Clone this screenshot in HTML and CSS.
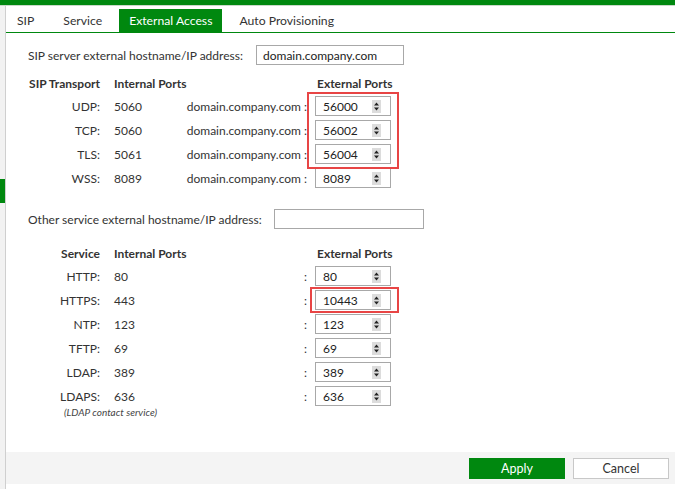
FILE: index.html
```html
<!DOCTYPE html>
<html>
<head>
<meta charset="utf-8">
<link rel="stylesheet" href="styles.css">
</head>
<body>
<div class="topbar"></div>
<div class="app">
  <aside class="rail"><div class="rail-mark"></div></aside>
  <main class="panel">
    <nav class="tabs">
      <span class="tab">SIP</span>
      <span class="tab">Service</span>
      <span class="tab active">External Access</span>
      <span class="tab">Auto Provisioning</span>
    </nav>
    <section class="form">
      <div class="host-row">
        <label class="host-label">SIP server external hostname/IP address:</label>
        <div class="text-input host-input">domain.company.com</div>
      </div>

      <div class="port-head first-head">
        <span class="c-label">SIP Transport</span>
        <span class="c-int">Internal Ports</span>
        <span class="c-host"></span>
        <span class="c-ext">External Ports</span>
      </div>
      <div class="port-rows">
        <div class="port-row"><span class="c-label">UDP:</span><span class="c-int">5060</span><span class="c-host">domain.company.com :</span><div class="spin"><span>56000</span><svg class="spin-btn" viewBox="0 0 9 13"><rect width="9" height="13" fill="#dcdcdc"/><path d="M4.5 2.5 L7 5.5 H2 Z M4.5 10.5 L7 7.5 H2 Z" fill="#222"/></svg></div></div>
        <div class="port-row"><span class="c-label">TCP:</span><span class="c-int">5060</span><span class="c-host">domain.company.com :</span><div class="spin"><span>56002</span><svg class="spin-btn" viewBox="0 0 9 13"><rect width="9" height="13" fill="#dcdcdc"/><path d="M4.5 2.5 L7 5.5 H2 Z M4.5 10.5 L7 7.5 H2 Z" fill="#222"/></svg></div></div>
        <div class="port-row"><span class="c-label">TLS:</span><span class="c-int">5061</span><span class="c-host">domain.company.com :</span><div class="spin"><span>56004</span><svg class="spin-btn" viewBox="0 0 9 13"><rect width="9" height="13" fill="#dcdcdc"/><path d="M4.5 2.5 L7 5.5 H2 Z M4.5 10.5 L7 7.5 H2 Z" fill="#222"/></svg></div></div>
        <div class="port-row"><span class="c-label">WSS:</span><span class="c-int">8089</span><span class="c-host">domain.company.com :</span><div class="spin"><span>8089</span><svg class="spin-btn" viewBox="0 0 9 13"><rect width="9" height="13" fill="#dcdcdc"/><path d="M4.5 2.5 L7 5.5 H2 Z M4.5 10.5 L7 7.5 H2 Z" fill="#222"/></svg></div></div>
      </div>

      <div class="host-row other-row">
        <label class="other-label">Other service external hostname/IP address:</label>
        <div class="text-input other-input"></div>
      </div>

      <div class="port-head second-head">
        <span class="c-label">Service</span>
        <span class="c-int">Internal Ports</span>
        <span class="c-host"></span>
        <span class="c-ext">External Ports</span>
      </div>
      <div class="port-rows">
        <div class="port-row"><span class="c-label">HTTP:</span><span class="c-int">80</span><span class="c-host">:</span><div class="spin"><span>80</span><svg class="spin-btn" viewBox="0 0 9 13"><rect width="9" height="13" fill="#dcdcdc"/><path d="M4.5 2.5 L7 5.5 H2 Z M4.5 10.5 L7 7.5 H2 Z" fill="#222"/></svg></div></div>
        <div class="port-row"><span class="c-label">HTTPS:</span><span class="c-int">443</span><span class="c-host">:</span><div class="spin"><span>10443</span><svg class="spin-btn" viewBox="0 0 9 13"><rect width="9" height="13" fill="#dcdcdc"/><path d="M4.5 2.5 L7 5.5 H2 Z M4.5 10.5 L7 7.5 H2 Z" fill="#222"/></svg></div></div>
        <div class="port-row"><span class="c-label">NTP:</span><span class="c-int">123</span><span class="c-host">:</span><div class="spin"><span>123</span><svg class="spin-btn" viewBox="0 0 9 13"><rect width="9" height="13" fill="#dcdcdc"/><path d="M4.5 2.5 L7 5.5 H2 Z M4.5 10.5 L7 7.5 H2 Z" fill="#222"/></svg></div></div>
        <div class="port-row"><span class="c-label">TFTP:</span><span class="c-int">69</span><span class="c-host">:</span><div class="spin"><span>69</span><svg class="spin-btn" viewBox="0 0 9 13"><rect width="9" height="13" fill="#dcdcdc"/><path d="M4.5 2.5 L7 5.5 H2 Z M4.5 10.5 L7 7.5 H2 Z" fill="#222"/></svg></div></div>
        <div class="port-row"><span class="c-label">LDAP:</span><span class="c-int">389</span><span class="c-host">:</span><div class="spin"><span>389</span><svg class="spin-btn" viewBox="0 0 9 13"><rect width="9" height="13" fill="#dcdcdc"/><path d="M4.5 2.5 L7 5.5 H2 Z M4.5 10.5 L7 7.5 H2 Z" fill="#222"/></svg></div></div>
        <div class="port-row"><span class="c-label">LDAPS:</span><span class="c-int">636</span><span class="c-host">:</span><div class="spin"><span>636</span><svg class="spin-btn" viewBox="0 0 9 13"><rect width="9" height="13" fill="#dcdcdc"/><path d="M4.5 2.5 L7 5.5 H2 Z M4.5 10.5 L7 7.5 H2 Z" fill="#222"/></svg></div></div>
      </div>
      <div class="note">(LDAP contact service)</div>

      <div class="highlight hl-sip"></div>
      <div class="highlight hl-https"></div>
    </section>
    <footer class="actions">
      <button class="btn btn-apply">Apply</button>
      <button class="btn btn-cancel">Cancel</button>
    </footer>
  </main>
</div>
</body>
</html>
```
FILE: styles.css
```css
* { box-sizing: border-box; }
html, body {
  margin: 0;
  padding: 0;
  width: 675px;
  height: 489px;
  overflow: hidden;
  background: #fff;
  font-family: Lato, "Open Sans", sans-serif;
  font-size: 12px;
  color: #333;
}
.topbar {
  height: 6px;
  background: #00880f;
  border-bottom: 1px solid #c9d9c9;
}
.app {
  display: flex;
  height: 483px;
}
.rail {
  width: 6px;
  flex: none;
  background: #f2f2f2;
  border-right: 1px solid #cfcfcf;
}
.rail-mark {
  margin-top: 173px;
  height: 24px;
  width: 5px;
  background: #00880f;
}
.panel {
  flex: 1;
  display: flex;
  flex-direction: column;
  min-width: 0;
}
.tabs {
  display: flex;
  margin-top: 3px;
  padding-left: 1px;
  height: 24px;
  border-bottom: 1px solid #00880f;
}
.tab {
  display: flex;
  align-items: center;
  height: 23px;
  padding: 0 10px;
  margin-right: 7px;
  font-size: 12.2px;
  color: #333;
}
.tab:first-child { margin-right: 9px; }
.tab.active {
  background: #00880f;
  color: #fff;
}
.form {
  position: relative;
  flex: 1;
  padding: 12px 0 0 22px;
}
.host-row {
  display: flex;
  align-items: center;
  height: 20px;
}
.host-label { width: 228px; }
.other-row { margin-top: 21px; }
.other-label { width: 246px; }
.text-input {
  height: 20px;
  border: 1px solid #a8a8a8;
  padding-left: 6px;
  display: flex;
  align-items: center;
  color: #222;
}
.host-input { width: 148px; }
.other-input { width: 150px; }
.port-head {
  display: flex;
  align-items: center;
  height: 16px;
  font-weight: bold;
  color: #333;
}
.first-head { margin-top: 10px; }
.second-head { margin-top: 16px; }
.port-rows {
  display: flex;
  flex-direction: column;
  gap: 4px;
  margin-top: 5px;
}
.port-row {
  display: flex;
  align-items: center;
  height: 20px;
}
.c-label {
  width: 72px;
  margin-right: 14px;
  text-align: right;
  flex: none;
  white-space: nowrap;
}
.c-int {
  width: 68px;
  flex: none;
  white-space: nowrap;
}
.c-host {
  width: 125px;
  margin-right: 8px;
  flex: none;
  display: flex;
  justify-content: flex-end;
  white-space: nowrap;
}
.c-ext {
  padding-left: 2px;
  white-space: nowrap;
}
.spin {
  width: 76px;
  height: 20px;
  border: 1px solid #a8a8a8;
  display: flex;
  align-items: center;
  justify-content: space-between;
  padding: 0 9px 0 7px;
  color: #222;
}
.spin-btn {
  width: 9px;
  height: 13px;
  display: block;
}
.note {
  padding-left: 36px;
  height: 12px;
  line-height: 12px;
  font-size: 10px;
  font-style: italic;
  color: #444;
}
.highlight {
  position: absolute;
  border: 2px solid #e84545;
}
.hl-sip {
  left: 301px;
  top: 59px;
  width: 92px;
  height: 77px;
}
.hl-https {
  left: 304px;
  top: 254px;
  width: 89px;
  height: 26px;
}
.actions {
  height: 32px;
  margin-bottom: 5px;
  background: #f4f4f4;
  display: flex;
  justify-content: flex-end;
  align-items: center;
  gap: 8px;
  padding-right: 6px;
}
.btn {
  width: 96px;
  height: 21px;
  font-family: Lato, "Open Sans", sans-serif;
  font-size: 12.5px;
  padding: 0;
  cursor: pointer;
}
.btn-apply {
  background: #00880f;
  border: 1px solid #00880f;
  color: #fff;
}
.btn-cancel {
  background: #fff;
  border: 1px solid #c8c8c8;
  color: #333;
}
```
